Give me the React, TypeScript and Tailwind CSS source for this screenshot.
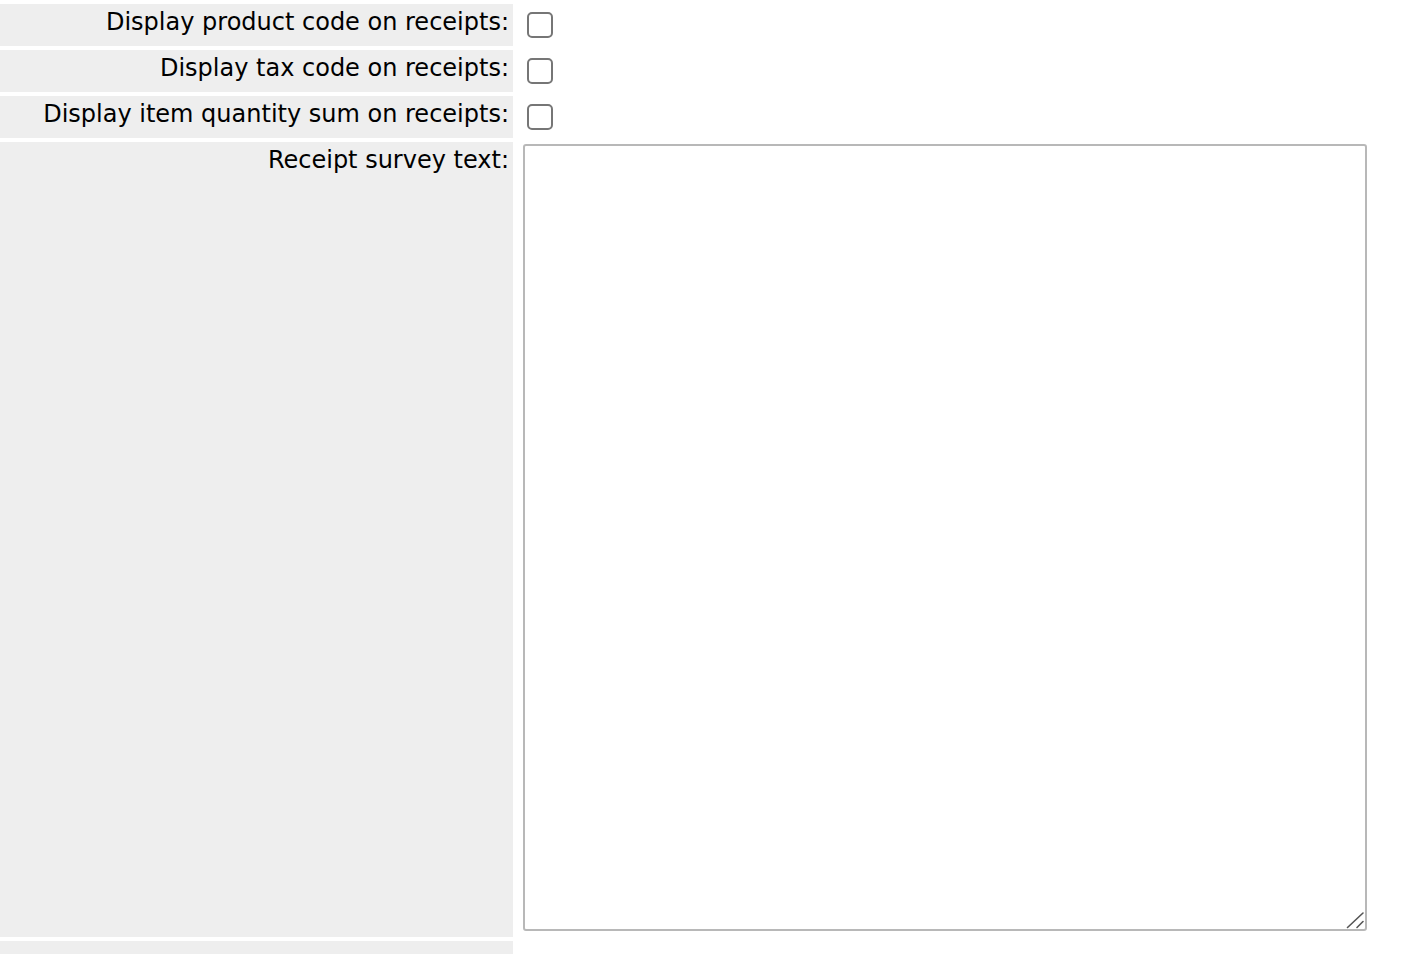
import React from "react";

const font = { fontFamily: '"DejaVu Sans", Verdana, sans-serif' };

function Checkbox() {
  return (
    <div className="ml-[14px] mt-[8px] h-[26px] w-[26px] rounded-[5px] border-2 border-[#767676] bg-white" />
  );
}

function CheckRow({ label }: { label: string }) {
  return (
    <div className="flex h-[42px]">
      <div className="h-full w-[513px] bg-[#eeeeee] pr-[4px] pt-[4px] text-right text-[24px] leading-[28px] text-black">
        {label}
      </div>
      <Checkbox />
    </div>
  );
}

export default function App() {
  return (
    <div className="min-h-[954px] bg-white pt-[4px] overflow-hidden" style={font}>
      <div className="flex flex-col gap-[4px]">
        <CheckRow label="Display product code on receipts:" />
        <CheckRow label="Display tax code on receipts:" />
        <CheckRow label="Display item quantity sum on receipts:" />
        <div className="flex h-[795px]">
          <div className="h-full w-[513px] bg-[#eeeeee] pr-[4px] pt-[4px] text-right text-[24px] leading-[28px] text-black">
            Receipt survey text:
          </div>
          <div className="relative ml-[10px] mt-[2px] h-[787px] w-[844px]">
            <textarea
              className="block h-full w-full resize-none rounded-[3px] border-2 border-[#b8b8b8] bg-white outline-none"
              style={font}
            />
            <svg
              className="pointer-events-none absolute bottom-0 right-0"
              width="24"
              height="24"
              viewBox="0 0 24 24"
            >
              <line x1="4.5" y1="20.5" x2="20" y2="6" stroke="#555555" strokeWidth="1.6" strokeLinecap="round" />
              <line x1="14" y1="20.5" x2="20" y2="14.5" stroke="#555555" strokeWidth="1.6" strokeLinecap="round" />
            </svg>
          </div>
        </div>
        <div className="flex h-[20px]">
          <div className="h-full w-[513px] bg-[#eeeeee]" />
        </div>
      </div>
    </div>
  );
}
